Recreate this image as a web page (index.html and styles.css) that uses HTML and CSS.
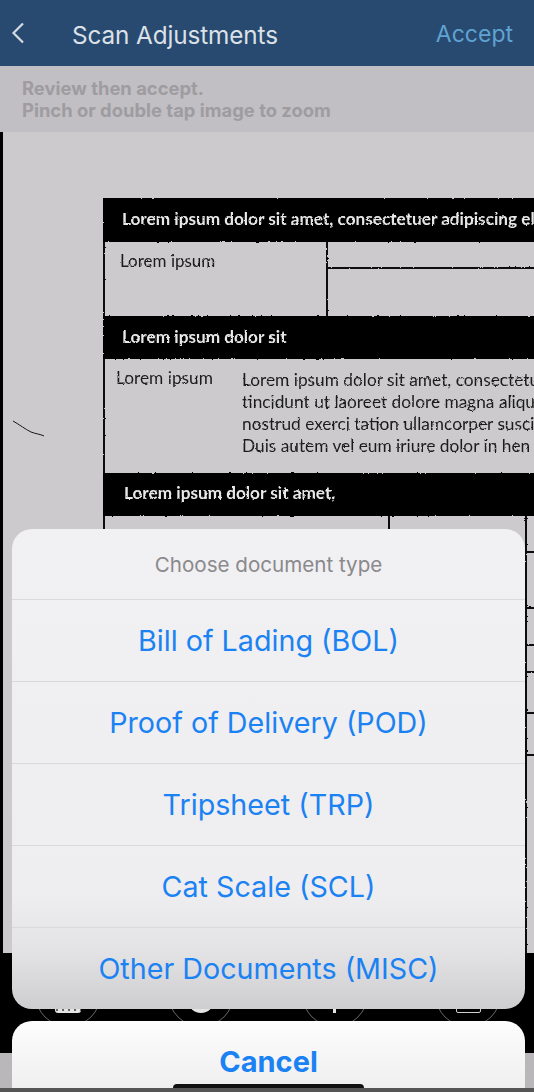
FILE: index.html
```html
<!DOCTYPE html>
<html lang="en">
<head>
<meta charset="utf-8">
<title>Scan Adjustments</title>
<link rel="stylesheet" href="styles.css">
</head>
<body>
<svg class="defs" width="0" height="0" aria-hidden="true">
  <filter id="rough" x="0" y="0" width="100%" height="100%">
    <feTurbulence type="fractalNoise" baseFrequency="0.35" numOctaves="2" seed="4"/>
    <feDisplacementMap in="SourceGraphic" scale="2.2" xChannelSelector="R" yChannelSelector="G"/>
  </filter>
</svg>
<div class="app">
  <header class="nav">
    <svg class="back" width="14" height="22" viewBox="0 0 14 22"><path d="M12 1.5 2.5 11 12 20.5" fill="none" stroke="#d3dae2" stroke-width="2.2"/></svg>
    <h1 class="nav-title">Scan Adjustments</h1>
    <span class="nav-action">Accept</span>
  </header>
  <div class="banner">
    <p>Review then accept.</p>
    <p>Pinch or double tap image to zoom</p>
  </div>
  <main class="doc">
    <svg class="stray" width="34" height="18" viewBox="0 0 34 18"><path d="M1 1C8 5 13 9 19 12 24 14 28 14 32 16" fill="none" stroke="#1a1a1a" stroke-width="1"/></svg>
    <div class="form">
      <div class="bar bar-first">Lorem ipsum dolor sit amet, consectetuer adipiscing el</div>
      <div class="row-one">
        <div class="cell-label">Lorem ipsum</div>
        <div class="cell-split"><div class="split-top"></div><div class="split-bottom"></div></div>
      </div>
      <div class="bar bar-second">Lorem ipsum dolor sit</div>
      <div class="row-two">
        <div class="label-two">Lorem ipsum</div>
        <div class="copy">
          <div>Lorem ipsum dolor sit amet, consectetu</div>
          <div>tincidunt ut laoreet dolore magna aliqu</div>
          <div>nostrud exerci tation ullamcorper susci</div>
          <div>Duis autem vel eum iriure dolor in hen</div>
        </div>
      </div>
      <div class="bar bar-third">Lorem ipsum dolor sit amet,</div>
      <div class="row-three">
        <div class="col col-a"></div>
        <div class="col col-b"></div>
        <div class="col col-c">
          <i></i><i></i><i></i><i></i><i></i><i></i><i></i>
        </div>
      </div>
    </div>
  </main>
  <div class="tools">
    <div class="tool"><span class="tool-icon icon-solid"></span></div>
    <div class="tool"><span class="tool-icon icon-blob"></span></div>
    <div class="tool"><span class="tool-icon icon-tick"></span></div>
    <div class="tool"><span class="tool-icon icon-outline"></span></div>
  </div>
  <div class="under"></div>
  <div class="edge"></div>

  <section class="sheet">
    <div class="sheet-title">Choose document type</div>
    <div class="sheet-item">Bill of Lading (BOL)</div>
    <div class="sheet-item">Proof of Delivery (POD)</div>
    <div class="sheet-item">Tripsheet (TRP)</div>
    <div class="sheet-item">Cat Scale (SCL)</div>
    <div class="sheet-item">Other Documents (MISC)</div>
  </section>
  <div class="cancel">Cancel</div>
  <div class="home"></div>
</div>
</body>
</html>
```
FILE: styles.css
```css
* { box-sizing: border-box; }
html, body { margin: 0; padding: 0; background: #000; }
.defs { position: absolute; }
.app {
  position: relative;
  width: 534px;
  height: 1092px;
  overflow: hidden;
  display: flex;
  flex-direction: column;
  font-family: Inter, "Liberation Sans", sans-serif;
}
.nav {
  height: 66px;
  flex: none;
  background: #284a70;
  display: flex;
  align-items: center;
  padding: 0 21px 0 11px;
}
.back { flex: none; margin-top: -1px; }
.nav-title {
  margin: 0 0 0 47px;
  flex: 1;
  font-size: 24.3px;
  font-weight: 400;
  color: #dce1e7;
  letter-spacing: -0.1px;
  position: relative;
  top: 2px;
}
.nav-action { font-size: 23px; color: #5fa3d3; position: relative; top: 1px; }
.banner {
  height: 66px;
  flex: none;
  background: #c1bfc3;
  padding: 11px 0 0 22px;
  font-size: 18.4px;
  font-weight: 700;
  line-height: 22px;
  color: #9e9ca0;
}
.banner p { margin: 0; }
.doc {
  position: relative;
  flex: 1;
  min-height: 0;
  background: #cccacd;
  border-left: 3px solid #000;
  padding: 66px 0 0 100px;
  overflow: hidden;
  display: flex;
}
.stray { position: absolute; left: 9px; top: 288px; }
.form {
  width: 520px;
  flex: none;
  display: flex;
  flex-direction: column;
  font-family: Lato, "Open Sans", sans-serif;
  color: #1c1c1c;
  filter: url(#rough);
}
.bar {
  flex: none;
  background: #000;
  color: #e8e8e8;
  font-size: 17.2px;
  font-weight: 700;
  padding-left: 19px;
  display: flex;
  align-items: center;
  white-space: nowrap;
}
.bar-first { height: 44px; padding-bottom: 4px; }
.bar-second { height: 43px; padding-bottom: 2px; }
.bar-third { height: 43px; padding-left: 21px; padding-bottom: 5px; }
.row-one { height: 74px; flex: none; display: flex; }
.cell-label {
  width: 223px;
  flex: none;
  border-left: 2px solid #111;
  padding: 8px 0 0 15px;
  font-size: 17px;
}
.cell-split { flex: 1; border-left: 2px solid #111; display: flex; flex-direction: column; }
.split-top { height: 27px; border-bottom: 2px solid #111; flex: none; }
.split-bottom { flex: 1; }
.row-two {
  height: 114px;
  flex: none;
  display: flex;
  border-left: 2px solid #111;
  padding: 8px 0 0 11px;
  font-size: 17.3px;
  white-space: nowrap;
}
.label-two { width: 126px; flex: none; }
.copy { line-height: 22px; margin-top: 2px; }
.row-three { flex: 1; min-height: 0; display: flex; }
.col { flex: none; border-left: 2px solid #111; }
.col-a { width: 285px; }
.col-b { width: 137px; }
.col-c {
  flex: 1;
  display: grid;
  grid-template-rows: 37px 56px 37px 27px 41px 42px 1fr;
}
.col-c i { border-bottom: 2px solid #111; }
.col-c i:last-child { border-bottom: 0; }
.tools {
  height: 100px;
  flex: none;
  background: #000;
  display: grid;
  grid-template-columns: repeat(4, 133.5px);
  padding: 8px 0 0 1px;
}
.tool {
  justify-self: center;
  width: 66px;
  height: 66px;
  border: 1px solid #6a6a6a;
  border-radius: 50%;
  display: flex;
  align-items: flex-end;
  justify-content: center;
  padding-bottom: 13px;
}
.tool-icon { display: block; }
.icon-solid {
  width: 26px;
  height: 20px;
  background: radial-gradient(circle, #666 1px, transparent 1.5px) 5px 100% / 6px 6px repeat-x #e4e4e4;
  border-radius: 3px;
}
.icon-blob { width: 26px; height: 26px; background: #e4e4e4; border-radius: 50%; }
.icon-tick { width: 3px; height: 10px; background: #e4e4e4; }
.icon-outline { width: 25px; height: 20px; border: 1px solid #cfcfcf; border-radius: 2px; }
.under { height: 35px; flex: none; background: #b9b7ba; }
.edge { height: 4px; flex: none; background: #555; }
.sheet {
  position: absolute;
  left: 12px;
  top: 529px;
  width: 513px;
  height: 480px;
  border-radius: 20px;
  overflow: hidden;
  background: linear-gradient(180deg, #f1f0f3 0%, #eeedf0 76%, #e3e2e5 88%, #cecdd0 100%);
  display: flex;
  flex-direction: column;
}
.sheet-title {
  height: 70px;
  flex: none;
  display: flex;
  align-items: center;
  justify-content: center;
  font-size: 20.6px;
  color: #8a898c;
}
.sheet-item {
  height: 82px;
  flex: none;
  border-top: 1px solid #dad9dc;
  display: flex;
  align-items: center;
  justify-content: center;
  font-size: 28.7px;
  color: #1a82f2;
}
.cancel {
  position: absolute;
  left: 12px;
  top: 1021px;
  width: 513px;
  height: 67px;
  border-radius: 20px 20px 0 0;
  background: linear-gradient(180deg, #fdfdfd 0%, #efefef 100%);
  display: flex;
  align-items: center;
  justify-content: center;
  font-size: 29px;
  font-weight: 700;
  color: #1a82f2;
  padding-top: 14px;
}
.home {
  position: absolute;
  left: 173px;
  top: 1084px;
  width: 191px;
  height: 4px;
  background: #111;
  border-radius: 4px 4px 0 0;
}
```
